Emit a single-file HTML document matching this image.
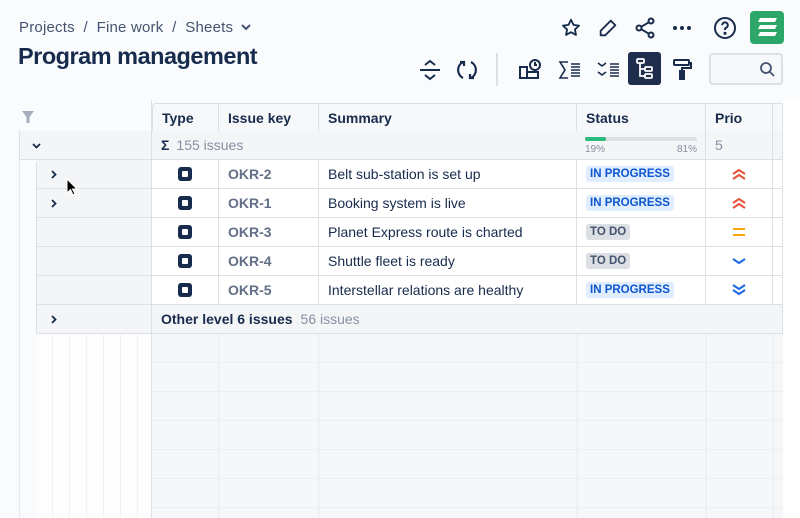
<!DOCTYPE html>
<html><head><style>
*{box-sizing:border-box;margin:0;padding:0}
body{width:800px;height:518px;overflow:hidden;background:#fafbfd;font-family:"Liberation Sans",sans-serif;color:#172b4d;position:relative}
.a{position:absolute}
.bc{left:19px;top:19px;font-size:15px;color:#44546f;letter-spacing:.2px}
.h1{left:18px;top:43px;font-size:23.5px;font-weight:bold;letter-spacing:-0.5px;color:#172b4d}
.cell{position:absolute;border-right:1px solid #dcdfe4;border-bottom:1px solid #dcdfe4;font-size:14px;display:flex;align-items:center;padding-left:9px;height:29px;background:#fff}
.hd{font-weight:bold;background:#f7f8f9}
.key{color:#626f86;font-weight:bold}
.lz{display:inline-block;font-size:11.5px;font-weight:bold;padding:2px 4px;border-radius:3px}
.ip{background:#e0edff;color:#0c56d0}
.td{background:#dcdfe4;color:#44546f}
.tp{width:14px;height:14px;background:#172b4d;border-radius:3px;position:relative;margin-left:17px}
.tp:after{content:"";position:absolute;left:4px;top:4px;width:6px;height:6px;background:#fff;border-radius:1px}
.ch{padding-left:13px}
svg{position:absolute}
</style></head><body>
<div class="a bc">Projects &nbsp;/&nbsp; Fine work &nbsp;/&nbsp; Sheets <svg style="position:relative;left:3px;top:-1px;display:inline-block;vertical-align:middle" width="10" height="8" viewBox="0 0 10 8" fill="none" stroke="#44546f" stroke-width="2"><path d="M1 2l4 4 4-4"/></svg></div>
<div class="a h1">Program management</div>

<!-- top icons -->
<svg style="left:560px;top:17px" width="22" height="22" viewBox="0 0 24 24" fill="none" stroke="#172b4d" stroke-width="2" stroke-linejoin="round"><path d="M12 3l2.7 5.6 6.1.8-4.5 4.2 1.1 6-5.4-3-5.4 3 1.1-6L3.2 9.4l6.1-.8z"/></svg>
<svg style="left:597px;top:17px" width="22" height="22" viewBox="0 0 24 24" fill="none" stroke="#172b4d" stroke-width="2" stroke-linejoin="round"><path d="M15 4l5 5L9 20H4v-5z"/></svg>
<svg style="left:633px;top:16px" width="24" height="24" viewBox="0 0 24 24" fill="none" stroke="#172b4d" stroke-width="2"><circle cx="18" cy="5" r="2.5"/><circle cx="6" cy="12" r="2.5"/><circle cx="18" cy="19" r="2.5"/><path d="M8.2 10.8l7.6-4.5M8.2 13.2l7.6 4.5"/></svg>
<svg style="left:671px;top:18px" width="22" height="20" viewBox="0 0 22 20" fill="#172b4d"><circle cx="4" cy="10" r="2"/><circle cx="11" cy="10" r="2"/><circle cx="18" cy="10" r="2"/></svg>
<svg style="left:713px;top:16px" width="24" height="24" viewBox="0 0 24 24" fill="none" stroke="#172b4d" stroke-width="2"><circle cx="12" cy="12" r="10"/><path d="M9.2 9.2a2.8 2.8 0 1 1 3.8 2.6c-.7.3-1 .8-1 1.5v.7"/><circle cx="12" cy="17.3" r=".6" fill="#172b4d"/></svg>
<div class="a" style="left:750px;top:11px;width:34px;height:33px;background:#2da66a;border-radius:4px"></div>
<svg style="left:750px;top:11px" width="34" height="33" viewBox="0 0 34 33" fill="#fff"><path d="M10 7h17l-2 4H8z M10 14h17l-2 4H8z M10 21h17l-2 4H8z"/></svg>

<!-- toolbar -->
<svg style="left:419px;top:58px" width="22" height="24" viewBox="0 0 22 24" fill="none" stroke="#172b4d" stroke-width="2"><path d="M1 12h20M6 7l5-4 5 4M6 17l5 4 5-4"/></svg>
<svg style="left:456px;top:58px" width="22" height="24" viewBox="0 0 22 24" fill="none" stroke="#172b4d" stroke-width="2.2"><path d="M7 4a9 9 0 0 0 0 16M15 4a9 9 0 0 1 0 16M4 4h4v4M18 20h-4v-4"/></svg>
<div class="a" style="left:496px;top:53px;width:2px;height:33px;background:#dcdfe4"></div>
<svg style="left:518px;top:58px" width="24" height="22" viewBox="0 0 24 22" fill="none" stroke="#172b4d" stroke-width="2"><rect x="2" y="9" width="7" height="11"/><path d="M9 14h11v6H9"/><circle cx="17" cy="7" r="5"/><path d="M17 4v3h2"/></svg>
<svg style="left:557px;top:59px" width="26" height="22" viewBox="0 0 26 22" fill="none" stroke="#172b4d" stroke-width="2"><path d="M11 3H3l5 8-5 8h8M14 5h9M14 11h9M14 17h9M14 8h9M14 14h9" stroke-width="1.6"/></svg>
<svg style="left:596px;top:59px" width="26" height="22" viewBox="0 0 26 22" fill="none" stroke="#172b4d" stroke-width="2"><path d="M2 4l4 3 4-3M2 13l4 3 4-3M14 5h9M14 11h9M14 17h9M14 8h9M14 14h9" stroke-width="1.6"/></svg>
<div class="a" style="left:628px;top:52px;width:33px;height:33px;background:#1f2e4d;border-radius:3px"></div>
<svg style="left:634px;top:57px" width="22" height="24" viewBox="0 0 22 24" fill="none" stroke="#fff" stroke-width="1.8"><rect x="3" y="2" width="7" height="4" rx="1"/><path d="M6 6v13h5M6 12h5"/><rect x="11" y="10" width="7" height="4" rx="1"/><rect x="11" y="17" width="7" height="4" rx="1"/></svg>
<svg style="left:671px;top:57px" width="24" height="24" viewBox="0 0 24 24" fill="none" stroke="#172b4d" stroke-width="2"><rect x="3" y="3" width="15" height="5" rx="1"/><path d="M18 6h2v5h-9v3"/><rect x="9" y="14" width="4" height="8" fill="#172b4d"/></svg>
<div class="a" style="left:709px;top:53px;width:74px;height:32px;border:2px solid #dcdfe4;border-radius:4px;background:#f7f8f9"></div>
<svg style="left:759px;top:61px" width="16" height="16" viewBox="0 0 16 16" fill="none" stroke="#44546f" stroke-width="1.8"><circle cx="7" cy="7" r="5"/><path d="M11 11l4 4"/></svg>

<!-- grid area -->
<div class="a" style="left:783px;top:100px;width:17px;height:418px;background:#fff"></div>
<div class="a" style="left:19px;top:131px;width:1px;height:387px;background:#e6e8eb"></div>
<div class="a" style="left:152px;top:334px;width:631px;height:184px;background:repeating-linear-gradient(#f6f7f9 0 28px,#eceef0 28px 29px)"></div>
<div class="a" style="left:36px;top:334px;width:116px;height:184px;background:repeating-linear-gradient(90deg,#fdfdfe 0 16px,#eef0f2 16px 17px)"></div>
<div class="a" style="left:151px;top:100px;width:1px;height:418px;background:#dcdfe4"></div>
<div class="a" style="left:218px;top:334px;width:2px;height:184px;background:#eef0f2"></div>
<div class="a" style="left:318px;top:334px;width:2px;height:184px;background:#eef0f2"></div>
<div class="a" style="left:576px;top:334px;width:2px;height:184px;background:#eef0f2"></div>
<div class="a" style="left:705px;top:334px;width:2px;height:184px;background:#eef0f2"></div>
<div class="a" style="left:772px;top:334px;width:2px;height:184px;background:#eef0f2"></div>

<svg style="left:22px;top:111px" width="12" height="12" viewBox="0 0 12 12" fill="#a5adba"><path d="M0 0h12L7.5 6v6h-3V6z"/></svg>

<!-- header -->
<div class="cell hd" style="left:152px;top:103px;width:67px;border-top:1px solid #dcdfe4;border-left:1px solid #dcdfe4;border-radius:4px 0 0 0">Type</div>
<div class="cell hd" style="left:219px;top:103px;width:100px;border-top:1px solid #dcdfe4">Issue key</div>
<div class="cell hd" style="left:319px;top:103px;width:258px;border-top:1px solid #dcdfe4">Summary</div>
<div class="cell hd" style="left:577px;top:103px;width:129px;border-top:1px solid #dcdfe4">Status</div>
<div class="cell hd" style="left:706px;top:103px;width:67px;border-top:1px solid #dcdfe4">Prio</div>
<div class="cell hd" style="left:773px;top:103px;width:10px;border-top:1px solid #dcdfe4"></div>

<!-- group row -->
<div class="cell" style="left:19px;top:131px;width:133px;background:#f4f5f7;border-left:1px solid #dcdfe4"><svg style="left:12px;top:12px" width="9" height="6" viewBox="0 0 9 6" fill="none" stroke="#172b4d" stroke-width="1.8"><path d="M1 1l3.5 3.5L8 1"/></svg></div>
<div class="cell" style="left:152px;top:131px;width:425px;background:#f4f5f7;border-right:none;color:#8590a2"><b style="color:#172b4d;margin-right:7px">&Sigma;</b>155 issues</div>
<div class="cell" style="left:577px;top:131px;width:129px;background:#f4f5f7;display:block;padding:6px 8px 0 8px">
<div style="height:4px;background:#dcdfe4;border-radius:2px"><div style="width:19%;height:4px;background:#2abb7f;border-radius:2px"></div></div>
<div style="display:flex;justify-content:space-between;font-size:10px;color:#8590a2;margin-top:3px"><span>19%</span><span>81%</span></div></div>
<div class="cell" style="left:706px;top:131px;width:67px;background:#f4f5f7;color:#8590a2">5</div>
<div class="cell" style="left:773px;top:131px;width:10px;background:#f4f5f7"></div>

<!-- rows -->
<div class="cell" style="left:36px;top:160px;width:116px;background:#f4f5f7;border-left:1px solid #dcdfe4;border-radius:4px 0 0 0"><svg style="left:14px;top:10px" width="6" height="9" viewBox="0 0 6 9" fill="none" stroke="#172b4d" stroke-width="1.8"><path d="M1 1l3.5 3.5L1 8"/></svg></div>
<div class="cell" style="left:36px;top:189px;width:116px;background:#f4f5f7;border-left:1px solid #dcdfe4"><svg style="left:14px;top:10px" width="6" height="9" viewBox="0 0 6 9" fill="none" stroke="#172b4d" stroke-width="1.8"><path d="M1 1l3.5 3.5L1 8"/></svg></div>
<div class="cell" style="left:36px;top:218px;width:116px;background:#f4f5f7;border-left:1px solid #dcdfe4"></div>
<div class="cell" style="left:36px;top:247px;width:116px;background:#f4f5f7;border-left:1px solid #dcdfe4"></div>
<div class="cell" style="left:36px;top:276px;width:116px;background:#f4f5f7;border-left:1px solid #dcdfe4"></div>

<div class="cell" style="left:152px;top:160px;width:67px"><div class="tp"></div></div>
<div class="cell key" style="left:219px;top:160px;width:100px">OKR-2</div>
<div class="cell" style="left:319px;top:160px;width:258px">Belt sub-station is set up</div>
<div class="cell" style="left:577px;top:160px;width:129px"><span class="lz ip">IN PROGRESS</span></div>
<div class="cell" style="left:706px;top:160px;width:67px"><svg style="left:26px;top:8px" width="14" height="12" viewBox="0 0 14 12" fill="none" stroke="#e5533a" stroke-width="2"><path d="M1 6l6-4 6 4M1 11l6-4 6 4"/></svg></div>
<div class="cell" style="left:773px;top:160px;width:10px"></div>

<div class="cell" style="left:152px;top:189px;width:67px"><div class="tp"></div></div>
<div class="cell key" style="left:219px;top:189px;width:100px">OKR-1</div>
<div class="cell" style="left:319px;top:189px;width:258px">Booking system is live</div>
<div class="cell" style="left:577px;top:189px;width:129px"><span class="lz ip">IN PROGRESS</span></div>
<div class="cell" style="left:706px;top:189px;width:67px"><svg style="left:26px;top:8px" width="14" height="12" viewBox="0 0 14 12" fill="none" stroke="#e5533a" stroke-width="2"><path d="M1 6l6-4 6 4M1 11l6-4 6 4"/></svg></div>
<div class="cell" style="left:773px;top:189px;width:10px"></div>

<div class="cell" style="left:152px;top:218px;width:67px"><div class="tp"></div></div>
<div class="cell key" style="left:219px;top:218px;width:100px">OKR-3</div>
<div class="cell" style="left:319px;top:218px;width:258px">Planet Express route is charted</div>
<div class="cell" style="left:577px;top:218px;width:129px"><span class="lz td">TO DO</span></div>
<div class="cell" style="left:706px;top:218px;width:67px"><svg style="left:26px;top:9px" width="14" height="10" viewBox="0 0 14 10" fill="none" stroke="#f5a50b" stroke-width="2"><path d="M1 2h12M1 8h12"/></svg></div>
<div class="cell" style="left:773px;top:218px;width:10px"></div>

<div class="cell" style="left:152px;top:247px;width:67px"><div class="tp"></div></div>
<div class="cell key" style="left:219px;top:247px;width:100px">OKR-4</div>
<div class="cell" style="left:319px;top:247px;width:258px">Shuttle fleet is ready</div>
<div class="cell" style="left:577px;top:247px;width:129px"><span class="lz td">TO DO</span></div>
<div class="cell" style="left:706px;top:247px;width:67px"><svg style="left:26px;top:10px" width="14" height="8" viewBox="0 0 14 8" fill="none" stroke="#1d6ae5" stroke-width="2"><path d="M1 2l6 4 6-4"/></svg></div>
<div class="cell" style="left:773px;top:247px;width:10px"></div>

<div class="cell" style="left:152px;top:276px;width:67px"><div class="tp"></div></div>
<div class="cell key" style="left:219px;top:276px;width:100px">OKR-5</div>
<div class="cell" style="left:319px;top:276px;width:258px">Interstellar relations are healthy</div>
<div class="cell" style="left:577px;top:276px;width:129px"><span class="lz ip">IN PROGRESS</span></div>
<div class="cell" style="left:706px;top:276px;width:67px"><svg style="left:26px;top:8px" width="14" height="12" viewBox="0 0 14 12" fill="none" stroke="#1d6ae5" stroke-width="2"><path d="M1 1l6 4 6-4M1 6l6 4 6-4"/></svg></div>
<div class="cell" style="left:773px;top:276px;width:10px"></div>

<div class="cell" style="left:36px;top:305px;width:116px;background:#f4f5f7;border-left:1px solid #dcdfe4"><svg style="left:14px;top:10px" width="6" height="9" viewBox="0 0 6 9" fill="none" stroke="#172b4d" stroke-width="1.8"><path d="M1 1l3.5 3.5L1 8"/></svg></div>
<div class="cell" style="left:152px;top:305px;width:631px;background:#f4f5f7"><b>Other level 6 issues</b><span style="color:#8590a2;margin-left:8px">56 issues</span></div>

<svg style="left:66px;top:178px" width="12" height="18" viewBox="0 0 12 18"><path d="M1 1v14l3.5-3.5 2.5 5.5 2-1-2.5-5H11z" fill="#000" stroke="#fff" stroke-width="1"/></svg>
</body></html>
